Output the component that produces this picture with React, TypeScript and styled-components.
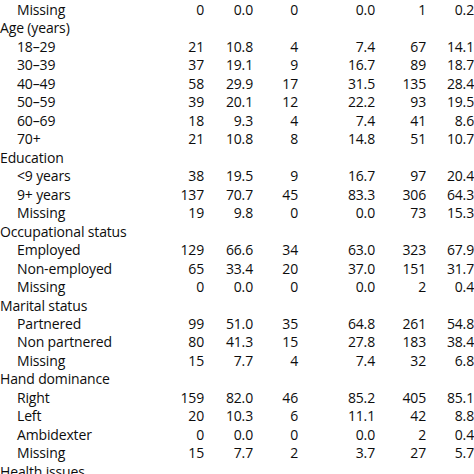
import React from 'react';
import styled, { createGlobalStyle } from 'styled-components';

// ── Data ─────────────────────────────────────────────────────
type Row =
    | { kind: 'group'; label: string }
    | { kind: 'item'; label: string; values: string[] };

const g = (label: string): Row => ({ kind: 'group', label });
const r = (label: string, ...values: string[]): Row => ({ kind: 'item', label, values });

const rows: Row[] = [
    r('Missing', '0', '0.0', '0', '0.0', '1', '0.2'),
    g('Age (years)'),
    r('18–29', '21', '10.8', '4', '7.4', '67', '14.1'),
    r('30–39', '37', '19.1', '9', '16.7', '89', '18.7'),
    r('40–49', '58', '29.9', '17', '31.5', '135', '28.4'),
    r('50–59', '39', '20.1', '12', '22.2', '93', '19.5'),
    r('60–69', '18', '9.3', '4', '7.4', '41', '8.6'),
    r('70+', '21', '10.8', '8', '14.8', '51', '10.7'),
    g('Education'),
    r('<9 years', '38', '19.5', '9', '16.7', '97', '20.4'),
    r('9+ years', '137', '70.7', '45', '83.3', '306', '64.3'),
    r('Missing', '19', '9.8', '0', '0.0', '73', '15.3'),
    g('Occupational status'),
    r('Employed', '129', '66.6', '34', '63.0', '323', '67.9'),
    r('Non-employed', '65', '33.4', '20', '37.0', '151', '31.7'),
    r('Missing', '0', '0.0', '0', '0.0', '2', '0.4'),
    g('Marital status'),
    r('Partnered', '99', '51.0', '35', '64.8', '261', '54.8'),
    r('Non partnered', '80', '41.3', '15', '27.8', '183', '38.4'),
    r('Missing', '15', '7.7', '4', '7.4', '32', '6.8'),
    g('Hand dominance'),
    r('Right', '159', '82.0', '46', '85.2', '405', '85.1'),
    r('Left', '20', '10.3', '6', '11.1', '42', '8.8'),
    r('Ambidexter', '0', '0.0', '0', '0.0', '2', '0.4'),
    r('Missing', '15', '7.7', '2', '3.7', '27', '5.7'),
    g('Health issues'),
];

// ── Styles ───────────────────────────────────────────────────
const GlobalStyle = createGlobalStyle`
    html, body { margin: 0; padding: 0; background: #fff; }
    body { width: 474px; height: 474px; overflow: hidden; }
`;

const Table = styled.div`
    display: grid;
    grid-template-columns: 170px 34px 49px 45px 77px 51px 48px;
    grid-auto-rows: 18.48px;
    width: 474px;
    padding-top: 1px;
    font-family: "Open Sans", "Noto Sans", sans-serif;
    font-size: 14px;
    line-height: 18.48px;
    color: #0d0d0d;
    letter-spacing: -0.15px;
`;

const Label = styled.div<{ $indent: boolean }>`
    padding-left: ${p => (p.$indent ? '17px' : '0')};
    white-space: nowrap;
    grid-column: ${p => (p.$indent ? 'auto' : '1 / -1')};
`;

const Num = styled.div`
    text-align: right;
    white-space: nowrap;
`;

export default function App() {
    return (
        <>
            <GlobalStyle />
            <Table>
                {rows.map((row, i) =>
                    row.kind === 'group' ? (
                        <Label key={i} $indent={false}>{row.label}</Label>
                    ) : (
                        <React.Fragment key={i}>
                            <Label $indent>{row.label}</Label>
                            {row.values.map((v, j) => (
                                <Num key={j}>{v}</Num>
                            ))}
                        </React.Fragment>
                    )
                )}
            </Table>
        </>
    );
}
